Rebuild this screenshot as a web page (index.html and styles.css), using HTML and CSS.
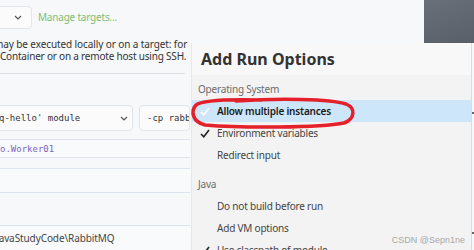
FILE: index.html
```html
<!DOCTYPE html>
<html lang="en">
<head>
    <meta charset="UTF-8">
    <title>Run Configuration - Add Run Options</title>
    <link rel="stylesheet" href="styles.css">
</head>
<body>
    <div class="settings">
        <div class="target-row">
            <div class="select-stub">
                <svg class="chevron" width="8" height="5" viewBox="0 0 8 5"><polyline points="1,1 4,4 7,1"/></svg>
            </div>
            <a href="#" class="manage-link">Manage targets...</a>
        </div>

        <p class="desc">
            <span class="desc-line first">may be executed locally or on a target: for</span>
            <span class="desc-line">Container or on a remote host using SSH.</span>
        </p>

        <hr class="divider">

        <div class="cmd-row">
            <div class="combo module-combo">
                <span class="mono">q-hello' module</span>
                <svg class="chevron" width="8" height="5" viewBox="0 0 8 5"><polyline points="1,1 4,4 7,1"/></svg>
            </div>
            <div class="combo cp-combo">
                <span class="mono">-cp rabbitmq-hello</span>
            </div>
        </div>

        <div class="field main-class"><span class="mono purple">o.Worker01</span></div>
        <div class="field program-args"></div>
        <div class="field workdir"><span class="workdir-text">JavaStudyCode\RabbitMQ</span></div>
    </div>

    <div class="window-corner"></div>
    <div class="edge-mark top"></div>
    <div class="edge-mark bottom"></div>

    <div class="run-options">
        <div class="popup-title">Add Run Options</div>
        <div class="popup-list">
            <div class="group-label">Operating System</div>
            <div class="option selected">
                <svg class="check" width="10" height="9" viewBox="0 0 10 9"><path d="M1 5 L3.8 7.8 L9 1"/></svg>
                Allow multiple instances
            </div>
            <div class="option">
                <svg class="check" width="10" height="9" viewBox="0 0 10 9"><path d="M1 5 L3.8 7.8 L9 1"/></svg>
                Environment variables
            </div>
            <div class="option">
                <span class="check-space"></span>
                Redirect input
            </div>

            <div class="group-label java">Java</div>
            <div class="option">
                <span class="check-space"></span>
                Do not build before run
            </div>
            <div class="option">
                <span class="check-space"></span>
                Add VM options
            </div>
            <div class="option">
                <svg class="check" width="10" height="9" viewBox="0 0 10 9"><path d="M1 5 L3.8 7.8 L9 1"/></svg>
                Use classpath of module
            </div>
        </div>
    </div>

    <!-- red hand-drawn mark from the screenshot -->
    <svg class="annotation" width="474" height="250" viewBox="0 0 474 250">
        <path d="M236 101 C280 98, 330 99, 346 104 C356 108, 355 119, 344 123 C320 128, 240 128, 205 125 C193 122, 190 112, 196 105 C202 100, 225 99, 262 100"/>
    </svg>

    <div class="watermark">CSDN @Sepn1ne</div>
</body>
</html>
```

FILE: styles.css
```css
body {
    margin: 0;
    width: 474px;
    height: 250px;
    overflow: hidden;
    position: relative;
    background: #f7f8fa;
    font-family: 'Noto Sans', 'Open Sans', sans-serif;
    font-size: 10px;
    color: #333;
}

.mono {
    font-family: 'DejaVu Sans Mono', 'Liberation Mono', monospace;
    font-size: 9px;
}

.purple {
    color: #7f63bd;
}

.chevron polyline {
    fill: none;
    stroke: #555;
    stroke-width: 1.2;
}

/* left settings panel */
.settings {
    width: 200px;
    margin-left: -10px;
}

.target-row {
    display: flex;
    align-items: center;
    margin-top: 5px;
    height: 24px;
}

.select-stub {
    width: 42px;
    height: 23px;
    box-sizing: border-box;
    border: 1px solid #e3e6ea;
    border-radius: 4px;
    background: #fbfbfc;
    display: flex;
    align-items: center;
    justify-content: flex-end;
    padding-right: 9px;
}

.manage-link {
    margin-left: 6px;
    color: #80bd72;
    text-decoration: none;
    letter-spacing: -0.2px;
}

.desc {
    margin: 9px 0 0 10px;
    line-height: 12px;
    letter-spacing: -0.2px;
}

.desc-line {
    display: block;
    white-space: nowrap;
}

.desc-line.first {
    margin-left: -6px;
    letter-spacing: -0.1px;
}

.divider {
    border: none;
    border-top: 1px solid #dfe1e5;
    margin: 11px 0 0 10px;
    width: 185px;
}

.cmd-row {
    display: flex;
    gap: 6px;
    margin-top: 31px;
    height: 26px;
}

.combo {
    box-sizing: border-box;
    border: 1px solid #e2e5e9;
    border-radius: 4px;
    background: #fbfbfc;
    display: flex;
    align-items: center;
    padding-left: 8px;
    overflow: hidden;
    white-space: nowrap;
}

.module-combo {
    width: 143px;
    justify-content: space-between;
    padding-right: 4px;
}

.cp-combo {
    flex: 1;
    padding-left: 7px;
}

.field {
    box-sizing: border-box;
    border-top: 1px solid #dde4ec;
    border-bottom: 1px solid #dde4ec;
    background: #f9fafc;
    padding-left: 10px;
    white-space: nowrap;
}

.main-class {
    margin-top: 8px;
    height: 19px;
    line-height: 17px;
}

.program-args {
    margin-top: 10px;
    height: 25px;
}

.workdir {
    margin-top: 32px;
    height: 40px;
    border-bottom: none;
    padding-top: 6px;
    line-height: 13px;
    color: #444;
}

.workdir-text {
    display: inline-block;
    margin-left: -4px;
    letter-spacing: -0.1px;
}

/* dark window edge at top right */
.window-corner {
    position: absolute;
    top: 0;
    right: 0;
    width: 50px;
    height: 43px;
    background: linear-gradient(160deg, #68707a, #585f68);
}

.edge-mark {
    position: absolute;
    right: 0;
    width: 3px;
    height: 2px;
    background: #666;
}

.edge-mark.top {
    top: 112px;
}

.edge-mark.bottom {
    top: 232px;
}

/* popup */
.run-options {
    position: absolute;
    left: 191px;
    top: 43px;
    width: 281px;
    bottom: -40px;
    border-left: 1px solid #e8e8e8;
    border-right: 1px solid #dcdcdc;
    box-sizing: border-box;
}

.popup-title {
    height: 32px;
    box-sizing: border-box;
    padding: 6px 0 0 9px;
    background: #f8f8f9;
    font-size: 16px;
    font-weight: 700;
    line-height: 20px;
    color: #333;
}

.popup-list {
    background: #f3f3f3;
    padding-top: 3px;
    height: 100%;
}

.group-label {
    height: 22px;
    line-height: 22px;
    padding-left: 6px;
    color: #6c6c6c;
    letter-spacing: -0.2px;
}

.group-label.java {
    margin-top: 7px;
}

.option {
    height: 22px;
    display: flex;
    align-items: center;
    padding-left: 8px;
    color: #444;
    letter-spacing: -0.2px;
}

.option .check,
.option .check-space {
    width: 10px;
    margin-right: 7px;
    flex: none;
}

.check path {
    fill: none;
    stroke: #222;
    stroke-width: 1.6;
}

.option.selected {
    background: #cde6fa;
    color: #1a1a1a;
    font-weight: 600;
}

.option.selected .check path {
    stroke: #fff;
}

.annotation {
    position: absolute;
    top: 0;
    left: 0;
    pointer-events: none;
}

.annotation path {
    fill: none;
    stroke: #e4212a;
    stroke-width: 3.5;
    stroke-linecap: round;
}

.watermark {
    position: absolute;
    right: 9px;
    bottom: 5px;
    font-family: 'Liberation Sans', sans-serif;
    font-size: 9px;
    color: #a8a8a8;
}
```
